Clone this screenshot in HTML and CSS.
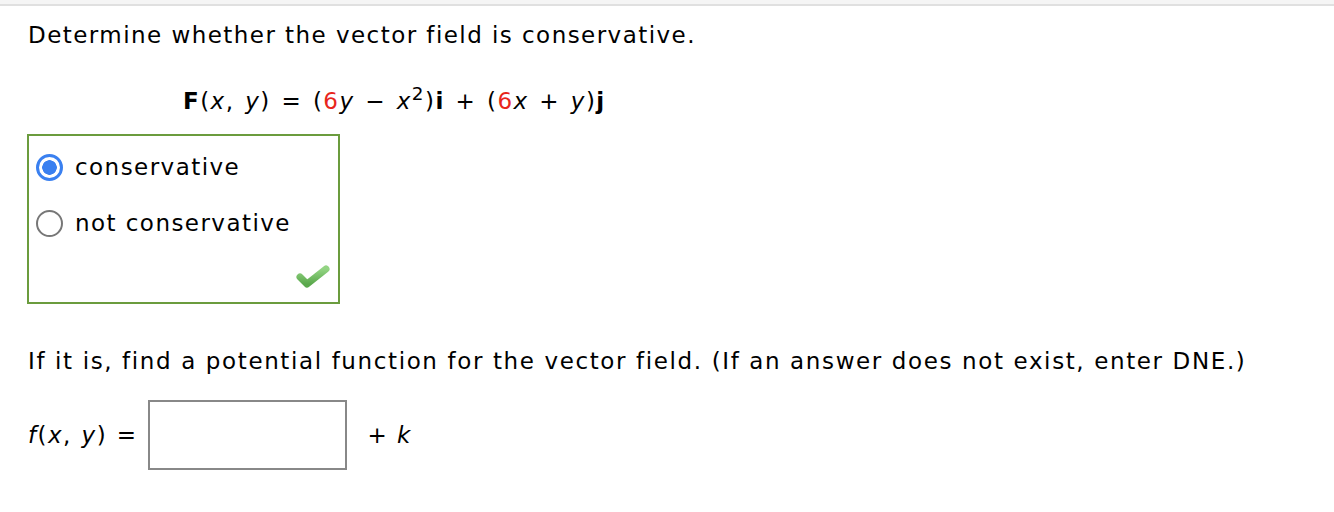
FILE: index.html
```html
<!DOCTYPE html>
<html>
<head>
<meta charset="utf-8">
<link rel="stylesheet" href="styles.css">
</head>
<body>
<div class="topbar"></div>
<main class="content">
  <p class="prompt">Determine whether the vector field is conservative.</p>
  <p class="formula"><b>F</b>(<i>x</i>, <i>y</i>) = (<span class="red">6</span><i>y</i> &minus; <i>x</i><sup>2</sup>)<b>i</b> + (<span class="red">6</span><i>x</i> + <i>y</i>)<b>j</b></p>
  <div class="choices">
    <label class="choice"><span class="radio checked"></span><span>conservative</span></label>
    <label class="choice"><span class="radio"></span><span>not conservative</span></label>
    <svg class="check" width="34" height="26" viewBox="0 0 34 26">
      <defs>
        <linearGradient id="g" x1="0" y1="0" x2="0" y2="1">
          <stop offset="0" stop-color="#93d483"/>
          <stop offset="1" stop-color="#5aa84c"/>
        </linearGradient>
      </defs>
      <polyline points="4,13 11,20 30,5" fill="none" stroke="url(#g)" stroke-width="7" stroke-linecap="round" stroke-linejoin="round"/>
    </svg>
  </div>
  <p class="prompt second">If it is, find a potential function for the vector field. (If an answer does not exist, enter DNE.)</p>
  <div class="answer">
    <span class="lhs"><i>f</i>(<i>x</i>, <i>y</i>)&nbsp;=</span>
    <span class="field"></span>
    <span>+ <i>k</i></span>
  </div>
</main>
</body>
</html>
```

FILE: styles.css
```css
body {
  margin: 0;
  background: #fff;
  color: #000;
  font-family: "DejaVu Sans", Verdana, sans-serif;
  font-size: 23px;
  letter-spacing: 1.45px;
}
.topbar {
  height: 4px;
  background: #f5f5f5;
  border-bottom: 2px solid #e0e0e0;
}
.content {
  padding-left: 28px;
}
p {
  margin: 0;
  line-height: 26px;
}
.prompt {
  margin-top: 16px;
}
.formula {
  margin-top: 40px;
  margin-left: 155px;
  word-spacing: 2px;
}
.formula sup {
  font-size: 0.8em;
  line-height: 0;
}
.red {
  color: #e8261c;
}
.choices {
  position: relative;
  box-sizing: border-box;
  width: 313px;
  height: 170px;
  margin-top: 20px;
  margin-left: -1px;
  border: 2px solid #6b9c3e;
  padding: 17px 0 0 7px;
}
.choice {
  display: flex;
  align-items: center;
  gap: 12px;
  height: 28px;
  margin-bottom: 28px;
}
.radio {
  box-sizing: border-box;
  width: 27px;
  height: 27px;
  border-radius: 50%;
  border: 2px solid #777;
  flex: none;
}
.radio.checked {
  border: 3px solid #3a80f0;
  background: radial-gradient(circle, #3a80f0 0 7px, #fff 7.5px);
}
.check {
  position: absolute;
  right: 8px;
  bottom: 12px;
}
.second {
  margin-top: 44px;
  letter-spacing: 1.62px;
}
.answer {
  display: flex;
  align-items: center;
  margin-top: 26px;
}
.lhs {
  word-spacing: 1px;
}
.field {
  box-sizing: border-box;
  width: 199px;
  height: 70px;
  border: 2px solid #888;
  margin: 0 21px 0 10px;
}
```
